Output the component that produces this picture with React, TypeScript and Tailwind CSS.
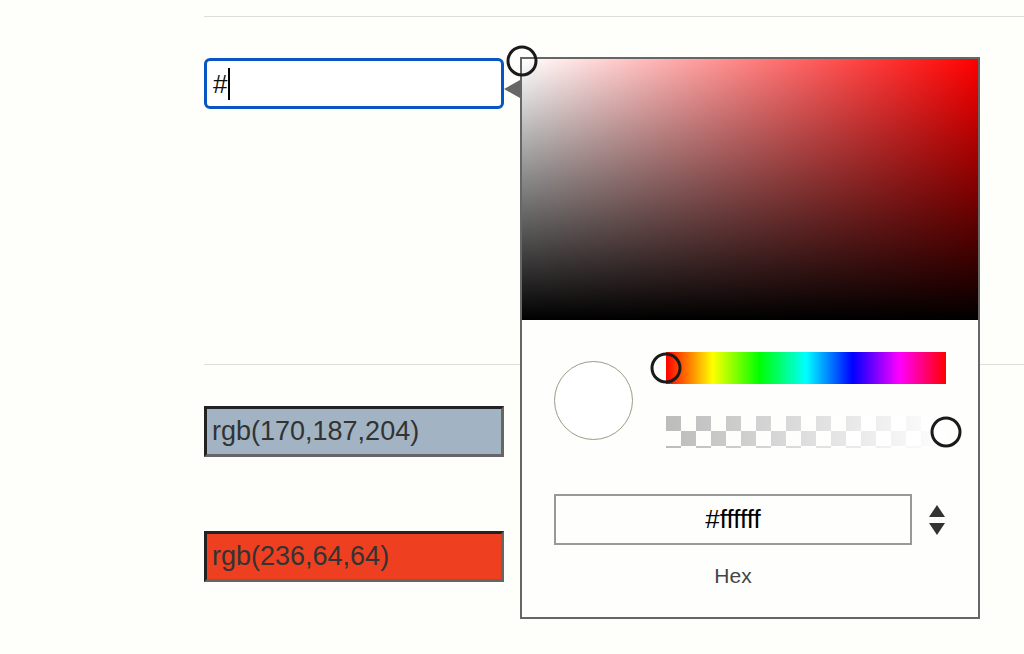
import React from "react";

const font = "font-['Liberation_Sans','Helvetica','Arial',sans-serif]";

// Small ring used as a drag handle on the picker tracks
function Handle({ className }: { className: string }) {
  return (
    <div
      className={`absolute w-[31px] h-[31px] rounded-full border-[3px] border-[#1a1a1a] -translate-x-1/2 -translate-y-1/2 ${className}`}
    />
  );
}

function ColorPicker() {
  return (
    <div className="absolute left-[520px] top-[57px] w-[460px] h-[562px] border-2 border-[#666] bg-[#fefefc]">
      {/* pointer towards the input */}
      <div className="absolute -left-[18px] top-[21px] w-0 h-0 border-y-[9px] border-y-transparent border-r-[16px] border-r-[#666]" />

      {/* saturation / value area */}
      <div className="relative h-[261px] bg-[linear-gradient(to_top,#000,transparent),linear-gradient(to_right,#fff,#f00)]">
        <Handle className="left-0 top-[2px]" />
      </div>

      <div className="pl-[32px] pt-[32px]">
        <div className="flex items-center">
          <div className="w-[79px] h-[79px] rounded-full border-[1.5px] border-[#9c9c86] bg-white" />
          <div className="ml-[33px] w-[280px] flex flex-col gap-[32px]">
            <div className="relative h-[32px] bg-[linear-gradient(to_right,#f00,#ff0,#0f0,#0ff,#00f,#f0f,#f00)]">
              <Handle className="left-0 top-1/2" />
            </div>
            <div className="relative h-[32px] bg-[conic-gradient(transparent_25%,#bcbcbc_0_50%,transparent_0_75%,#bcbcbc_0)] bg-size-[30px_30px]">
              <div className="absolute inset-0 bg-linear-to-r from-transparent to-white" />
              <Handle className="left-full top-1/2" />
            </div>
          </div>
        </div>

        <div className="mt-[46px] flex items-center">
          <div
            className={`w-[358px] h-[51px] border-2 border-[#999] flex items-center justify-center text-[26px] text-black ${font}`}
          >
            #ffffff
          </div>
          <div className="ml-[17px] flex flex-col gap-[6px]">
            <div className="w-0 h-0 border-x-[8.5px] border-x-transparent border-b-[12px] border-b-[#333]" />
            <div className="w-0 h-0 border-x-[8.5px] border-x-transparent border-t-[12px] border-t-[#333]" />
          </div>
        </div>
        <div className={`w-[358px] mt-[19px] text-center text-[21px] leading-[24px] text-[#444] ${font}`}>
          Hex
        </div>
      </div>
    </div>
  );
}

export default function App() {
  return (
    <div className={`relative w-full h-[654px] overflow-hidden bg-[#fefefb] ${font}`}>
      <div className="pl-[204px] pt-[16px]">
        <div className="h-px bg-[#deded6]" />

        <div className="mt-[41px] w-[300px] h-[51px] rounded-[6px] border-[3px] border-[#0a55c4] bg-white flex items-center pl-[6px]">
          <span className="text-[26px] text-[#111] leading-none">#</span>
          <span className="ml-[1px] w-[1.5px] h-[32px] bg-black" />
        </div>

        <div className="mt-[255px] h-px bg-[#deded6]" />

        <div className="mt-[41px] w-[300px] h-[51px] border-[3px] border-t-[#222] border-l-[#222] border-b-[#666] border-r-[#666] bg-[#a2b4c4] flex items-center pl-[5px] text-[27px] text-[#333]">
          rgb(170,187,204)
        </div>

        <div className="mt-[74px] w-[300px] h-[51px] border-[3px] border-t-[#222] border-l-[#222] border-b-[#666] border-r-[#666] bg-[#ee4020] flex items-center pl-[5px] text-[27px] text-[#333]">
          rgb(236,64,64)
        </div>
      </div>

      <ColorPicker />
    </div>
  );
}
